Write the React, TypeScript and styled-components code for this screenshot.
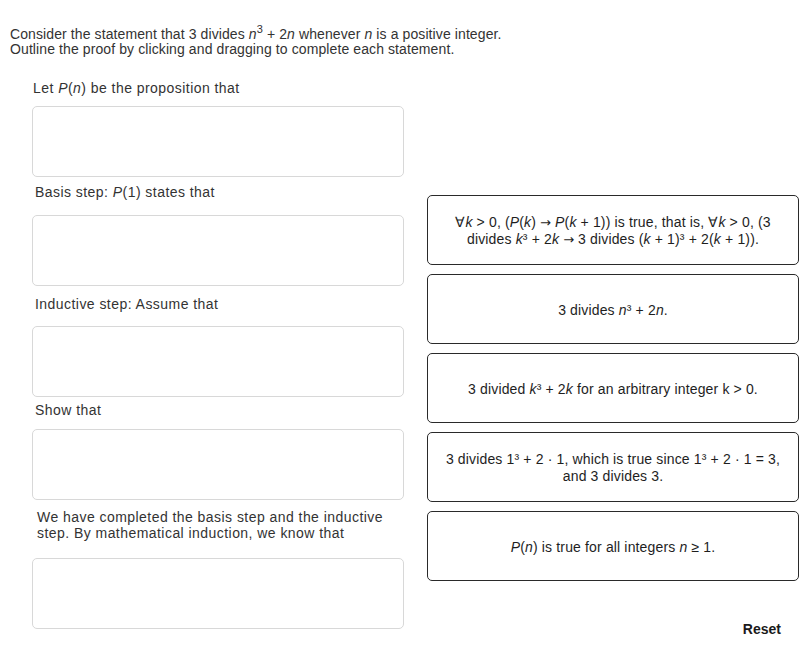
import React from 'react';
import styled, { createGlobalStyle } from 'styled-components';

const Global = createGlobalStyle`
  html, body { background: #ffffff; }
  body {
    margin: 8px;
    font-family: "Liberation Sans", Arial, Helvetica, sans-serif;
    color: #222222;
  }
`;

const Page = styled.div`
  width: 795px;
  padding-top: 19px;
`;

const Prompt = styled.p`
  margin: 0 0 0 2px;
  font-size: 14px;
  line-height: 15px;
  color: #333333;
  letter-spacing: 0.1px;
`;

const Sup = styled.sup`
  font-size: 11px;
  line-height: 0;
  vertical-align: 6px;
`;

const V = styled.i`
  font-style: italic;
`;

const Arrow = styled.span`
  font-family: "DejaVu Sans", sans-serif;
  font-size: 13px;
  line-height: 0;
  letter-spacing: 0;
`;

const Workspace = styled.div`
  display: flex;
  align-items: flex-start;
  gap: 23px;
  margin-top: 23px;
  padding-left: 24px;
`;

const LeftColumn = styled.div`
  width: 372px;
  display: flex;
  flex-direction: column;
`;

const Label = styled.div<{ $indent: number; $above: number; $below: number }>`
  margin: ${(p) => p.$above}px 0 ${(p) => p.$below}px ${(p) => p.$indent}px;
  font-size: 14px;
  line-height: 16px;
  color: #333333;
  letter-spacing: 0.45px;
`;

const DropZone = styled.div`
  box-sizing: border-box;
  height: 71px;
  border: 1px solid #d8d8d8;
  border-radius: 5px;
  background: #ffffff;
`;

const RightColumn = styled.div`
  width: 372px;
  padding-top: 115px;
  display: flex;
  flex-direction: column;
  gap: 9px;
`;

const Card = styled.div`
  box-sizing: border-box;
  height: 70px;
  border: 1px solid #2a2a2a;
  border-radius: 5px;
  padding: 2px 14px 0;
  display: flex;
  align-items: center;
  justify-content: center;
  text-align: center;
  font-size: 14px;
  line-height: 17px;
  letter-spacing: 0.15px;
  color: #1e1e1e;
  background: #ffffff;
  cursor: grab;
`;

const Actions = styled.div`
  display: flex;
  justify-content: flex-end;
  padding-right: 18px;
  margin-top: 31px;
`;

const ResetButton = styled.button`
  border: none;
  background: none;
  padding: 0;
  font-family: "Liberation Sans", Arial, sans-serif;
  font-size: 14px;
  font-weight: bold;
  line-height: 16px;
  color: #1a1a1a;
  cursor: pointer;
`;

export default function App() {
  return (
    <>
      <Global />
      <Page>
        <Prompt>
          Consider the statement that 3 divides <V>n</V>
          <Sup>3</Sup> + 2<V>n</V> whenever <V>n</V> is a positive integer.
          <br />
          Outline the proof by clicking and dragging to complete each statement.
        </Prompt>
        <Workspace>
          <LeftColumn>
            <Label $indent={1} $above={0} $below={10}>
              Let <V>P</V>(<V>n</V>) be the proposition that
            </Label>
            <DropZone />
            <Label $indent={3} $above={7} $below={15}>
              Basis step: <V>P</V>(1) states that
            </Label>
            <DropZone />
            <Label $indent={3} $above={10} $below={14}>
              Inductive step: Assume that
            </Label>
            <DropZone />
            <Label $indent={3} $above={5} $below={11}>
              Show that
            </Label>
            <DropZone />
            <Label $indent={5} $above={9} $below={17}>
              We have completed the basis step and the inductive step. By
              mathematical induction, we know that
            </Label>
            <DropZone />
          </LeftColumn>
          <RightColumn>
            <Card>
              <span>
                ∀<V>k</V> &gt; 0, (<V>P</V>(<V>k</V>) <Arrow>→</Arrow> <V>P</V>(<V>k</V> + 1))
                is true, that is, ∀<V>k</V> &gt; 0, (3 divides <V>k</V>³ + 2<V>k</V>{' '}
                <Arrow>→</Arrow> 3 divides (<V>k</V> + 1)³ + 2(<V>k</V> + 1)).
              </span>
            </Card>
            <Card>
              <span>
                3 divides <V>n</V>³ + 2<V>n</V>.
              </span>
            </Card>
            <Card>
              <span>
                3 divided <V>k</V>³ + 2<V>k</V> for an arbitrary integer k &gt; 0.
              </span>
            </Card>
            <Card>
              <span>
                3 divides 1³ + 2 · 1, which is true since 1³ + 2 · 1 = 3, and 3
                divides 3.
              </span>
            </Card>
            <Card>
              <span>
                <V>P</V>(<V>n</V>) is true for all integers <V>n</V> ≥ 1.
              </span>
            </Card>
            <Actions>
              <ResetButton type="button">Reset</ResetButton>
            </Actions>
          </RightColumn>
        </Workspace>
      </Page>
    </>
  );
}
